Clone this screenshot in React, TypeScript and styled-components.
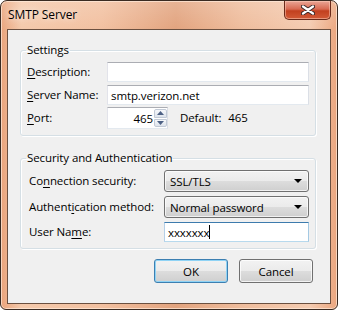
import styled, { createGlobalStyle } from "styled-components";

const GlobalStyle = createGlobalStyle`
  html, body {
    margin: 0;
    padding: 0;
    background: #fff;
  }
  body {
    font-family: "Open Sans", "Noto Sans", "Liberation Sans", sans-serif;
    font-size: 11.5px;
    letter-spacing: -0.1px;
    color: #000;
  }
  * {
    box-sizing: border-box;
  }
`;

export default function App() {
  return (
    <>
      <GlobalStyle />
      <Window>
        <TitleBar>
          <Title>SMTP Server</Title>
          <CloseBtn>
            <svg width="14" height="10" viewBox="0 0 14 10">
              <path d="M2 1.5 L12 8.5 M12 1.5 L2 8.5" stroke="#3b2a2a" strokeWidth="4.2" strokeLinecap="round" />
              <path d="M2 1.5 L12 8.5 M12 1.5 L2 8.5" stroke="#fff" strokeWidth="2.2" strokeLinecap="round" />
            </svg>
          </CloseBtn>
        </TitleBar>

        <Client>
          <GroupBox>
            <Legend>Settings</Legend>
            <SettingsGrid>
              <Label>
                <Accel>D</Accel>escription:
              </Label>
              <TextBox />

              <Label>
                <Accel>S</Accel>erver Name:
              </Label>
              <TextBox>smtp.verizon.net</TextBox>

              <Label>
                <Accel>P</Accel>ort:
              </Label>
              <PortRow>
                <SpinBox>
                  <SpinValue>465</SpinValue>
                  <SpinButtons>
                    <SpinArrow $up>
                      <svg width="7" height="4" viewBox="0 0 7 4">
                        <path d="M0 4 L3.5 0 L7 4 Z" fill="#4d6185" />
                      </svg>
                    </SpinArrow>
                    <SpinArrow>
                      <svg width="7" height="4" viewBox="0 0 7 4">
                        <path d="M0 0 L3.5 4 L7 0 Z" fill="#4d6185" />
                      </svg>
                    </SpinArrow>
                  </SpinButtons>
                </SpinBox>
                <DefaultTxt>Default:</DefaultTxt>
                <DefaultTxt>465</DefaultTxt>
              </PortRow>
            </SettingsGrid>
          </GroupBox>

          <GroupBox $second>
            <Legend>Security and Authentication</Legend>
            <SecurityGrid>
              <Label $indent>
                Co<Accel>n</Accel>nection security:
              </Label>
              <Combo>
                SSL/TLS
                <DropArrow />
              </Combo>

              <Label $indent>
                Authent<Accel>i</Accel>cation method:
              </Label>
              <Combo>
                Normal password
                <DropArrow />
              </Combo>

              <Label $indent>
                User Na<Accel>m</Accel>e:
              </Label>
              <TextBox $focused>
                xxxxxxx
                <Caret />
              </TextBox>
            </SecurityGrid>
          </GroupBox>

          <ButtonRow>
            <DialogBtn $default>OK</DialogBtn>
            <DialogBtn>Cancel</DialogBtn>
          </ButtonRow>
        </Client>
      </Window>
    </>
  );
}

const Window = styled.div`
  width: 338px;
  height: 310px;
  display: flex;
  flex-direction: column;
  border: 1px solid #3a2b22;
  border-radius: 7px 7px 6px 6px;
  overflow: hidden;
  background:
    linear-gradient(180deg, rgba(255, 255, 255, 0.18) 0px, rgba(255, 255, 255, 0) 30px),
    linear-gradient(
      90deg,
      #eaa47c 0%,
      #f4c9ab 6%,
      #f2c0a0 30%,
      #e2a37e 52%,
      #efbd9d 72%,
      #f4cbb0 92%,
      #eba67f 100%
    );
  box-shadow: inset 0 0 0 1px rgba(255, 235, 220, 0.7);
`;

const TitleBar = styled.div`
  height: 28px;
  display: flex;
  justify-content: space-between;
  align-items: flex-start;
  padding-left: 7px;
`;

const Title = styled.div`
  margin-top: 6px;
  color: #000;
  font-size: 12px;
  line-height: 16px;
  text-shadow: 0 0 6px rgba(255, 255, 255, 0.9);
`;

const CloseBtn = styled.div`
  width: 47px;
  height: 19px;
  margin-right: 6px;
  display: flex;
  justify-content: center;
  align-items: center;
  border: 1px solid #6a2a1a;
  border-top: none;
  border-radius: 0 0 5px 5px;
  background: linear-gradient(180deg, #eaa696 0%, #d86a52 45%, #c2401f 55%, #d25a36 100%);
  box-shadow: inset 0 0 0 1px rgba(255, 210, 190, 0.5);
`;

const Client = styled.div`
  flex: 1;
  margin: 0 6px 5px 6px;
  padding: 12px 14px 0 12px;
  border: 1px solid #6b5040;
  background: #f0f0f0;
  display: flex;
  flex-direction: column;
`;

const GroupBox = styled.fieldset<{ $second?: boolean }>`
  margin: ${(p) => (p.$second ? "14px" : "0")} 0 0 0;
  padding: 4px 6px ${(p) => (p.$second ? "6px" : "7px")} 6px;
  min-width: 0;
  border: 1px solid #d5dfe5;
  border-radius: 3px;
  box-shadow: inset 1px 1px 0 #fff, 1px 1px 0 #fff;
`;

const Legend = styled.legend`
  padding: 0 1px;
  margin-left: -1px;
  line-height: 16px;
`;

const SettingsGrid = styled.div`
  display: grid;
  grid-template-columns: 80px 1fr;
  grid-auto-rows: 20px;
  row-gap: 3px;
  align-items: center;
`;

const SecurityGrid = styled.div`
  display: grid;
  grid-template-columns: 137px 1fr;
  grid-template-rows: 22px 22px 20px;
  row-gap: 4px;
  align-items: center;
`;

const Label = styled.div<{ $indent?: boolean }>`
  padding-left: ${(p) => (p.$indent ? "2px" : "0")};
  white-space: nowrap;
  line-height: 16px;
`;

const Accel = styled.span`
  text-decoration: underline;
  text-underline-offset: 2px;
`;

const TextBox = styled.div<{ $focused?: boolean }>`
  height: 20px;
  display: flex;
  align-items: center;
  padding-left: 3px;
  background: #fff;
  border: 1px solid;
  border-color: ${(p) =>
    p.$focused
      ? "#3d7bad #a4c9e3 #b7d9ed #b5cfe7"
      : "#abadb3 #dbdfe6 #e3e9ef #e2e3ea"};
  white-space: nowrap;
`;

const Caret = styled.span`
  width: 1px;
  height: 14px;
  background: #000;
`;

const PortRow = styled.div`
  display: flex;
  align-items: center;
  height: 20px;
`;

const SpinBox = styled.div`
  width: 61px;
  height: 22px;
  display: flex;
  background: #fff;
  border: 1px solid;
  border-color: #abadb3 #dbdfe6 #e3e9ef #e2e3ea;
`;

const SpinValue = styled.div`
  flex: 1;
  display: flex;
  align-items: center;
  justify-content: flex-end;
  padding-right: 1px;
`;

const SpinButtons = styled.div`
  width: 13px;
  display: flex;
  flex-direction: column;
  gap: 1px;
  padding: 1px 0;
`;

const SpinArrow = styled.div<{ $up?: boolean }>`
  flex: 1;
  display: flex;
  justify-content: center;
  align-items: center;
  border: 1px solid #c2cad6;
  border-radius: ${(p) => (p.$up ? "2px 2px 0 0" : "0 0 2px 2px")};
  background: linear-gradient(180deg, #f6f8fb 0%, #dde3ec 100%);
`;

const DefaultTxt = styled.div`
  margin-left: 12px;
  line-height: 16px;

  & + & {
    margin-left: 7px;
  }
`;

const Combo = styled.div`
  height: 22px;
  position: relative;
  display: flex;
  align-items: center;
  padding-left: 5px;
  border: 1px solid #707070;
  border-radius: 3px;
  background: linear-gradient(180deg, #f2f2f2 0%, #ebebeb 50%, #dddddd 50%, #cfcfcf 100%);
  box-shadow: inset 0 0 0 1px rgba(255, 255, 255, 0.7);
  white-space: nowrap;
`;

const DropArrow = styled.span`
  position: absolute;
  right: 6px;
  top: 8px;
  width: 0;
  height: 0;
  border-left: 4px solid transparent;
  border-right: 4px solid transparent;
  border-top: 4px solid #000;
`;

const ButtonRow = styled.div`
  display: flex;
  justify-content: flex-end;
  gap: 11px;
  margin-top: 10px;
  padding-right: 3px;
`;

const DialogBtn = styled.div<{ $default?: boolean }>`
  width: 74px;
  height: 24px;
  display: flex;
  justify-content: center;
  align-items: center;
  border: 1px solid ${(p) => (p.$default ? "#3c7fb1" : "#707070")};
  border-radius: 3px;
  background: linear-gradient(180deg, #f2f2f2 0%, #ebebeb 50%, #dddddd 50%, #cfcfcf 100%);
  box-shadow: ${(p) =>
    p.$default
      ? "inset 0 0 0 1px #8fd3f5"
      : "inset 0 0 0 1px rgba(255, 255, 255, 0.75)"};
`;
